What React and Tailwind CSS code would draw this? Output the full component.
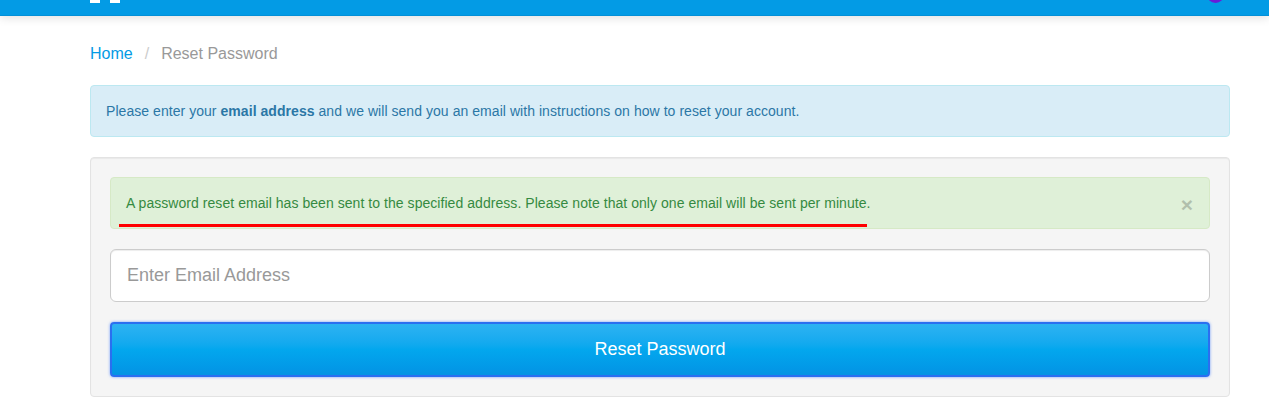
import React from "react";

export default function App() {
  return (
    <div
      className="relative w-[1269px] h-[418px] bg-white overflow-hidden"
      style={{ fontFamily: '"Liberation Sans", Arial, sans-serif' }}
    >
      {/* top bar */}
      <div className="relative h-[16px] bg-[#039be5] shadow-[0_2px_10px_rgba(0,0,0,0.12)] border-b border-[#0390d8]">
        <div className="absolute left-[90px] top-0 flex gap-[10px]">
          <div className="w-[10px] h-[3px] bg-white" />
          <div className="w-[10px] h-[3px] bg-white" />
        </div>
        <div className="absolute left-[1207px] top-[-14px] w-[17px] h-[17px] rounded-full bg-[#6a1bd8]" />
      </div>

      <div className="w-[1140px] ml-[90px]">
        {/* breadcrumb */}
        <div className="flex items-center h-[22px] mt-[27px] text-[16px]">
          <span className="text-[#039be5]">Home</span>
          <span className="text-[#ccc] px-[10px] ml-[2px]">/</span>
          <span className="text-[#999] ml-[2px]">Reset Password</span>
        </div>

        {/* info alert */}
        <div className="mt-[20px] h-[52px] flex items-center px-[15px] bg-[#d9edf7] border border-[#bce8f1] rounded-[4px] text-[#2b77a6] text-[14px] tracking-[0.05px]">
          <span>
            Please enter your <b>email address</b> and we will send you an email with instructions on how to reset your account.
          </span>
        </div>

        {/* well */}
        <div className="mt-[20px] bg-[#f5f5f5] border border-[#e3e3e3] rounded-[4px] p-[19px] shadow-[inset_0_1px_1px_rgba(0,0,0,0.05)]">
          <div className="relative h-[52px] flex items-center justify-between pl-[15px] pr-[16px] bg-[#dff0d8] border border-[#d6e9c6] rounded-[4px] text-[#358a41] text-[14px] tracking-[0.05px]">
            <span>
              A password reset email has been sent to the specified address. Please note that only one email will be sent per minute.
            </span>
            <span className="text-[21px] font-bold leading-none text-black opacity-20 mt-[2px]">×</span>
          </div>

          <div className="mt-[20px] h-[53px] flex items-center px-[16px] bg-white border border-[#ccc] rounded-[6px] shadow-[inset_0_1px_1px_rgba(0,0,0,0.075)]">
            <span className="text-[18px] text-[#999]">Enter Email Address</span>
          </div>

          <div className="mt-[20px] h-[55px] flex items-center justify-center rounded-[4px] border-2 border-[#2a6ff0] bg-gradient-to-b from-[#2cb2f2] via-[#03a7ee] to-[#0393e4] text-white text-[18px] shadow-[0_0_3px_rgba(60,120,255,0.7)]">
            Reset Password
          </div>
        </div>
      </div>

      {/* red annotation underline */}
      <div className="absolute left-[119px] top-[224px] w-[748px] h-[3px] bg-[#ff0000]" />
    </div>
  );
}
